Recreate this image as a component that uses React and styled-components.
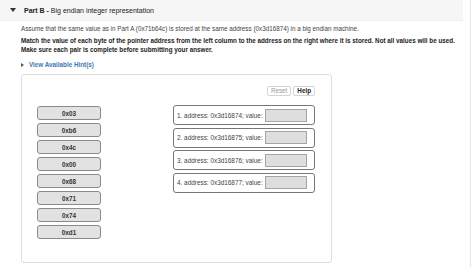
import React from 'react';
import styled, { createGlobalStyle } from 'styled-components';

const GlobalStyle = createGlobalStyle`
  html, body {
    margin: 0;
    padding: 0;
    background: #fff;
  }
  body {
    font-family: "Liberation Sans", Arial, sans-serif;
    color: #333;
  }
`;

const Page = styled.div`
  width: 470px;
  height: 267px;
  border-right: 1px solid #e6e6e6;
  overflow: hidden;
`;

const PartHeader = styled.div`
  display: flex;
  align-items: center;
  height: 21px;
  margin-right: 7px;
  padding-left: 10px;
  background: #f6f6f6;
  border-bottom: 1px solid #efefef;
  box-sizing: border-box;
  font-size: 7px;
  color: #222;
  white-space: nowrap;
`;

const Caret = styled.span`
  display: inline-block;
  width: 0;
  height: 0;
  margin-right: ${p => (p.small ? '5px' : '8px')};
  ${p =>
    p.right
      ? `border-top: 2.5px solid transparent; border-bottom: 2.5px solid transparent; border-left: 3.5px solid #555;`
      : `border-left: 3px solid transparent; border-right: 3px solid transparent; border-top: 4px solid #333;`}
`;

const Body = styled.div`
  padding: 3px 0 0 21px;
`;

const Para = styled.p`
  margin: 0;
  font-size: 6.3px;
  line-height: 9px;
  white-space: nowrap;
  font-weight: ${p => (p.bold ? 700 : 400)};
  color: ${p => (p.bold ? '#222' : '#444')};
  margin-bottom: ${p => p.gap || 0}px;
`;

const HintLink = styled.div`
  display: flex;
  align-items: center;
  margin-top: 6px;
  height: 9px;
  font-size: 6.3px;
  font-weight: 700;
  color: #3d78b5;
`;

const Panel = styled.div`
  margin-top: 5px;
  width: 311px;
  height: 189px;
  box-sizing: border-box;
  border: 1px solid #dedede;
  border-radius: 3px;
  padding: 11px 15px 0 15px;
`;

const Toolbar = styled.div`
  display: flex;
  justify-content: flex-end;
  gap: 2px;
  padding-right: 1px;
`;

const ToolButton = styled.button`
  font-family: inherit;
  font-size: 6.3px;
  font-weight: ${p => (p.strong ? 700 : 400)};
  color: ${p => (p.strong ? '#222' : '#999')};
  background: #fff;
  border: 1px solid #d4d4d4;
  border-radius: 2px;
  padding: 0 3px;
  height: 10px;
  line-height: 8px;
`;

const Board = styled.div`
  display: flex;
  align-items: flex-start;
  margin-top: 9px;
`;

const Sources = styled.div`
  display: flex;
  flex-direction: column;
  gap: 3px;
  width: 64px;
  margin-top: 1px;
`;

const Chip = styled.div`
  height: 14px;
  box-sizing: border-box;
  border: 1px solid #8a8a8a;
  border-radius: 3px;
  background: #e2e2e2;
  display: flex;
  align-items: center;
  justify-content: center;
  font-size: 6.3px;
  font-weight: 700;
  color: #333;
`;

const Targets = styled.div`
  display: flex;
  flex-direction: column;
  gap: 2.5px;
  margin-left: 72px;
`;

const Slot = styled.div`
  width: 142px;
  height: 20px;
  box-sizing: border-box;
  border: 1.5px solid #777;
  border-radius: 3px;
  display: flex;
  align-items: center;
  gap: 2px;
  padding: 0 0 0 3px;
  font-size: 6.4px;
  color: #444;
  white-space: nowrap;
`;

const Drop = styled.div`
  width: 42px;
  height: 13px;
  flex-shrink: 0;
  box-sizing: border-box;
  border: 1px solid #a5a5a5;
  background: #dedede;
`;

const values = ['0x03', '0xb6', '0x4c', '0x00', '0x68', '0x71', '0x74', '0xd1'];
const addresses = ['0x3d16874', '0x3d16875', '0x3d16876', '0x3d16877'];

export default function App() {
  return (
    <Page>
      <GlobalStyle />
      <PartHeader>
        <Caret />
        <span>
          <b>Part B -</b> Big endian integer representation
        </span>
      </PartHeader>
      <Body>
        <Para gap={3}>
          Assume that the same value as in Part A (0x71b64c) is stored at the same address (0x3d16874) in a big endian machine.
        </Para>
        <Para bold>
          Match the value of each byte of the pointer address from the left column to the address on the right where it is stored. Not all values will be used.
        </Para>
        <Para bold>Make sure each pair is complete before submitting your answer.</Para>
        <HintLink>
          <Caret right small />
          View Available Hint(s)
        </HintLink>
        <Panel>
          <Toolbar>
            <ToolButton>Reset</ToolButton>
            <ToolButton strong>Help</ToolButton>
          </Toolbar>
          <Board>
            <Sources>
              {values.map(v => (
                <Chip key={v}>{v}</Chip>
              ))}
            </Sources>
            <Targets>
              {addresses.map((a, i) => (
                <Slot key={a}>
                  <span>
                    {i + 1}. address: {a}; value:
                  </span>
                  <Drop />
                </Slot>
              ))}
            </Targets>
          </Board>
        </Panel>
      </Body>
    </Page>
  );
}
